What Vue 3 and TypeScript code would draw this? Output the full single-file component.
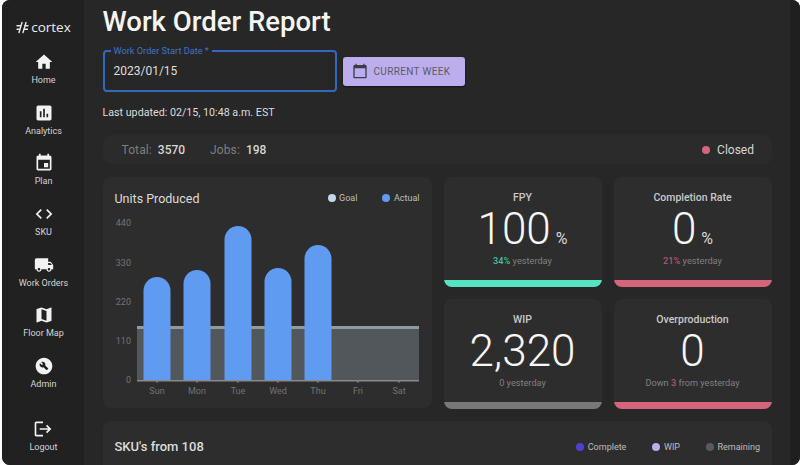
<script setup lang="ts">
interface NavItem { label: string; d: string; evenodd?: boolean }
interface Stat { title: string; value: string; unit?: string; pre?: string; delta: string; post: string; tone: string }

const nav: NavItem[] = [
  { label: 'Home', d: 'M10 20v-6h4v6h5v-8h3L12 3 2 12h3v8z' },
  { label: 'Analytics', d: 'M19 3H5c-1.1 0-2 .9-2 2v14c0 1.1.9 2 2 2h14c1.1 0 2-.9 2-2V5c0-1.1-.9-2-2-2zM9 17H7v-7h2v7zm4 0h-2V7h2v10zm4 0h-2v-4h2v4z' },
  { label: 'Plan', d: 'M17 12h-5v5h5v-5zM16 1v2H8V1H6v2H5c-1.11 0-1.99.9-1.99 2L3 19c0 1.1.89 2 2 2h14c1.1 0 2-.9 2-2V5c0-1.1-.9-2-2-2h-1V1h-2zm3 18H5V8h14v11z' },
  { label: 'SKU', d: 'M9.4 16.6L4.8 12l4.6-4.6L8 6l-6 6 6 6 1.4-1.4zm5.2 0l4.6-4.6-4.6-4.6L16 6l6 6-6 6-1.4-1.4z' },
  { label: 'Work Orders', d: 'M20 8h-3V4H3c-1.1 0-2 .9-2 2v11h2c0 1.66 1.34 3 3 3s3-1.34 3-3h6c0 1.66 1.34 3 3 3s3-1.34 3-3h2v-5l-3-4zM6 18.5c-.83 0-1.5-.67-1.5-1.5s.67-1.5 1.5-1.5 1.5.67 1.5 1.5-.67 1.5-1.5 1.5zm13.5-9l1.96 2.5H17V9.5h2.5zm-1.5 9c-.83 0-1.5-.67-1.5-1.5s.67-1.5 1.5-1.5 1.5.67 1.5 1.5-.67 1.5-1.5 1.5z' },
  { label: 'Floor Map', d: 'M20.5 3l-.16.03L15 5.1 9 3 3.36 4.9c-.21.07-.36.25-.36.48V20.5c0 .28.22.5.5.5l.16-.03L9 18.9l6 2.1 5.64-1.9c.21-.07.36-.25.36-.48V3.5c0-.28-.22-.5-.5-.5zM15 19l-6-2.11V5l6 2.11V19z' },
  { label: 'Admin', d: 'M12 2C6.48 2 2 6.48 2 12c0 5.52 4.48 10 10 10s10-4.48 10-10C22 6.48 17.52 2 12 2zM16.9 15.49l-1.4 1.4c-.2.2-.51.2-.71 0l-3.41-3.41c-1.22.43-2.64.17-3.62-.81-1.11-1.11-1.3-2.79-.59-4.1l2.35 2.35 1.41-1.41L8.58 7.17c1.32-.71 2.99-.52 4.1.59.98.98 1.24 2.4.81 3.62l3.41 3.41c.19.19.19.51 0 .7z' },
]
const logout: NavItem = { label: 'Logout', d: 'M17 7l-1.41 1.41L18.17 11H8v2h10.17l-2.58 2.58L17 17l5-5zM4 5h8V3H4c-1.1 0-2 .9-2 2v14c0 1.1.9 2 2 2h8v-2H4V5z' }

const stats: Stat[] = [
  { title: 'FPY', value: '100', unit: '%', delta: '34%', post: ' yesterday', tone: 'good' },
  { title: 'Completion Rate', value: '0', unit: '%', delta: '21%', post: ' yesterday', tone: 'bad' },
  { title: 'WIP', value: '2,320', delta: '0', post: ' yesterday', tone: 'flat' },
  { title: 'Overproduction', value: '0', pre: 'Down ', delta: '3', post: ' from yesterday', tone: 'bad' },
]

const base = 169
const days = ['Sun', 'Mon', 'Tue', 'Wed', 'Thu', 'Fri', 'Sat']
const centers = [54, 94, 135, 175, 215, 255, 296]
const tops = [65, 58, 14, 56, 33]
const yLabels = [{ t: '440', y: 11 }, { t: '330', y: 51 }, { t: '220', y: 90 }, { t: '110', y: 129 }, { t: '0', y: 168 }]
const barW = 27
const r = 13.5
const barPath = (i: number): string => {
  const x = centers[i] - barW / 2
  return `M${x} ${base}V${tops[i] + r}A${r} ${r} 0 0 1 ${x + barW} ${tops[i] + r}V${base}Z`
}
const skuLegend = [
  { label: 'Complete', color: '#4f3fd0' },
  { label: 'WIP', color: '#bcaeee' },
  { label: 'Remaining', color: '#5a5a5a' },
]
</script>

<template>
  <div class="frame">
    <aside class="sidebar">
      <div class="logo">
        <svg width="13" height="13" viewBox="0 0 13 13" fill="none" stroke="#e8e8e8" stroke-width="1.4" stroke-linecap="round">
          <path d="M6 1.5L3 11.5M10 1.5L7 11.5M1 4.8L5 4.8M8.6 4.8H12M1 8.2H4M7.8 8.2H11.5" />
        </svg>
        <span>cortex</span>
      </div>
      <nav class="nav">
        <a v-for="item in nav" :key="item.label" class="nav-item">
          <svg width="20" height="20" viewBox="0 0 24 24" fill="#f2f2f2"><path :d="item.d" fill-rule="evenodd" /></svg>
          <span>{{ item.label }}</span>
        </a>
      </nav>
      <a class="nav-item logout">
        <svg width="20" height="20" viewBox="0 0 24 24" fill="#f2f2f2"><path :d="logout.d" /></svg>
        <span>{{ logout.label }}</span>
      </a>
    </aside>

    <main class="main">
      <h1 class="title">Work Order Report</h1>
      <div class="filters">
        <div class="field">
          <span class="field-label">Work Order Start Date *</span>
          <span class="field-value">2023/01/15</span>
        </div>
        <button class="week-btn" type="button">
          <svg width="16" height="16" viewBox="0 0 24 24" fill="#3d3a4a"><path d="M20 3h-1V1h-2v2H7V1H5v2H4c-1.1 0-2 .9-2 2v16c0 1.1.9 2 2 2h16c1.1 0 2-.9 2-2V5c0-1.1-.9-2-2-2zm0 18H4V8h16v13z" /></svg>
          CURRENT WEEK
        </button>
      </div>
      <p class="updated">Last updated: 02/15, 10:48 a.m. EST</p>

      <section class="summary">
        <span class="sum-label">Total:</span><b class="sum-value">3570</b>
        <span class="sum-label jobs">Jobs:</span><b class="sum-value">198</b>
        <span class="status"><i class="status-dot"></i>Closed</span>
      </section>

      <section class="grid">
        <article class="card chart-card">
          <header class="chart-head">
            <h2>Units Produced</h2>
            <span class="legend goal"><i class="dot dot-goal"></i>Goal</span>
            <span class="legend actual"><i class="dot dot-actual"></i>Actual</span>
          </header>
          <svg class="chart" width="329" height="196" viewBox="0 0 329 196">
            <rect x="34" y="116" width="282" height="53" fill="#52575c" />
            <rect x="34" y="114" width="282" height="3" fill="#8f9ba3" />
            <path v-for="(_, i) in tops" :key="i" :d="barPath(i)" fill="#5f9bf0" />
            <rect x="34" y="168" width="282" height="1.5" fill="#8a8a8a" />
            <rect v-for="c in centers" :key="'t' + c" :x="c - 0.5" y="169" width="1" height="2" fill="#8a8a8a" />
            <text v-for="l in yLabels" :key="l.t" x="28" :y="l.y + 3" text-anchor="end" class="axis">{{ l.t }}</text>
            <text v-for="(d, i) in days" :key="d" :x="centers[i]" y="182" text-anchor="middle" class="axis">{{ d }}</text>
          </svg>
        </article>

        <article v-for="s in stats" :key="s.title" class="card stat">
          <h3>{{ s.title }}</h3>
          <div class="stat-value">{{ s.value }}<small v-if="s.unit">{{ s.unit }}</small></div>
          <p class="stat-sub">{{ s.pre }}<b :class="s.tone">{{ s.delta }}</b>{{ s.post }}</p>
          <div class="stat-bar" :class="s.tone"></div>
        </article>
      </section>

      <section class="card sku">
        <h2>SKU's from 108</h2>
        <div class="sku-legend">
          <span v-for="l in skuLegend" :key="l.label" class="legend">
            <i class="dot" :style="{ background: l.color }"></i>{{ l.label }}
          </span>
        </div>
      </section>
    </main>
    <div class="rail"></div>
  </div>
</template>

<style>
html, body { margin: 0; background: #fff; }
</style>

<style scoped>
.frame {
  display: flex;
  width: 798.5px;
  height: 465px;
  margin-left: 1.5px;
  overflow: hidden;
  border-radius: 8px;
  background: #272727;
  font-family: Roboto, "Liberation Sans", sans-serif;
  color: #e6e6e6;
}
.sidebar {
  box-sizing: border-box;
  width: 82px;
  padding-left: 2px;
  flex: none;
  display: flex;
  flex-direction: column;
  align-items: center;
  background: #212121;
}
.logo {
  display: flex;
  align-items: center;
  gap: 2px;
  height: 16px;
  margin-top: 19px;
  font-family: "Open Sans", sans-serif;
  font-size: 13.5px;
  color: #ececec;
}
.nav {
  display: flex;
  flex-direction: column;
  align-items: center;
  gap: 16.7px;
  margin-top: 17px;
}
.nav-item {
  display: flex;
  flex-direction: column;
  align-items: center;
  gap: 3px;
  height: 34px;
  font-size: 9px;
  line-height: 11px;
  color: #d4d4d4;
  white-space: nowrap;
}
.logout { margin-top: auto; margin-bottom: 12px; }

.main {
  flex: 1;
  min-width: 0;
  padding: 6px 18px 0 19px;
}
.title {
  margin: 0;
  font-size: 27.5px;
  line-height: 32px;
  font-weight: 500;
  color: #f5f5f5;
}
.filters {
  display: flex;
  align-items: center;
  gap: 6px;
  margin-top: 12px;
}
.field {
  position: relative;
  box-sizing: border-box;
  width: 234px;
  height: 42px;
  padding: 0 9px;
  display: flex;
  align-items: center;
  border: 2px solid #3468bd;
  border-radius: 4px;
}
.field-label {
  position: absolute;
  top: -6px;
  left: 6px;
  padding: 0 3px;
  font-size: 9.2px;
  line-height: 10px;
  background: #272727;
  color: #3f73cc;
  white-space: nowrap;
}
.field-value { font-size: 12px; color: #dedede; }
.week-btn {
  display: flex;
  align-items: center;
  gap: 6px;
  width: 122px;
  height: 29px;
  padding: 0 0 0 9px;
  border: 0;
  border-radius: 3px;
  background: #bcaeee;
  font-family: inherit;
  font-size: 10px;
  letter-spacing: 0.35px;
  color: #5c5a66;
  box-shadow: 0 1px 2px rgba(0, 0, 0, 0.5);
}
.updated {
  margin: 14px 0 0;
  font-size: 10.7px;
  line-height: 14px;
  color: #dcdcdc;
}
.summary {
  display: flex;
  align-items: center;
  height: 29px;
  margin-top: 15px;
  padding: 0 18px 0 19px;
  border-radius: 8px;
  background: #2b2b2b;
  font-size: 12px;
}
.sum-label { color: #7e7e7e; letter-spacing: 0.1px; }
.sum-value { margin-left: 6px; font-weight: 500; color: #d6d6d6; }
.jobs { margin-left: 25px; }
.status {
  display: flex;
  align-items: center;
  gap: 7px;
  margin-left: auto;
  color: #d6d6d6;
}
.status-dot {
  width: 8px;
  height: 8px;
  border-radius: 50%;
  background: #d4657a;
}

.card {
  border-radius: 8px;
  background: #2d2d2d;
}
.grid {
  display: grid;
  grid-template-columns: 329px 158px 158px;
  grid-template-rows: 110px 110px;
  gap: 12px;
  margin-top: 13px;
}
.chart-card {
  grid-row: span 2;
  overflow: hidden;
  margin-bottom: 1px;
}
.chart-head {
  display: flex;
  align-items: center;
  height: 35px;
  padding: 7px 12px 0;
  box-sizing: border-box;
}
.chart-head h2 {
  margin: 0 auto 0 0;
  font-size: 12.5px;
  font-weight: 400;
  color: #dcdcdc;
}
.legend {
  display: inline-flex;
  align-items: center;
  gap: 3.5px;
  font-size: 9px;
  color: #bdbdbd;
  white-space: nowrap;
}
.legend.goal { margin-right: 25px; }
.dot {
  width: 8px;
  height: 8px;
  border-radius: 50%;
}
.dot-goal { background: #c5d5ec; }
.dot-actual { background: #5f9bf0; }
.chart { display: block; }
.axis {
  font-size: 9px;
  fill: #737373;
}

.stat {
  position: relative;
  overflow: hidden;
  text-align: center;
}
.stat h3 {
  margin: 0;
  padding-top: 14px;
  font-size: 10.5px;
  line-height: 14px;
  font-weight: 500;
  color: #c9c9c9;
}
.stat-value {
  font-size: 44px;
  line-height: 44px;
  margin-top: 2px;
  font-weight: 300;
  color: #f7f7f7;
}
.stat-value small {
  margin-left: 5px;
  font-size: 16px;
  line-height: 1;
  font-weight: 400;
  color: #d8d8d8;
}
.stat-sub {
  margin: 4px 0 0;
  font-size: 9.2px;
  line-height: 12px;
  color: #808080;
}
.stat-sub b { font-weight: 500; }
.stat-sub b.good { color: #46bfa4; }
.stat-sub b.bad { color: #b3566a; }
.stat-sub b.flat { color: #808080; font-weight: 400; }
.stat-bar {
  position: absolute;
  left: 0;
  right: 0;
  bottom: 0;
  height: 7px;
}
.stat-bar.good { background: #55e3c2; }
.stat-bar.bad { background: #d4657a; }
.stat-bar.flat { background: #787878; }

.sku {
  display: flex;
  justify-content: space-between;
  height: 60px;
  margin-top: 12px;
  padding: 18px 12px 0;
  box-sizing: border-box;
}
.sku h2 {
  margin: 0;
  font-size: 13px;
  line-height: 16px;
  font-weight: 500;
  color: #dcdcdc;
}
.sku-legend {
  display: flex;
  gap: 26px;
  height: 16px;
}
.rail {
  width: 10px;
  flex: none;
  background: #1f1f1f;
}
</style>
